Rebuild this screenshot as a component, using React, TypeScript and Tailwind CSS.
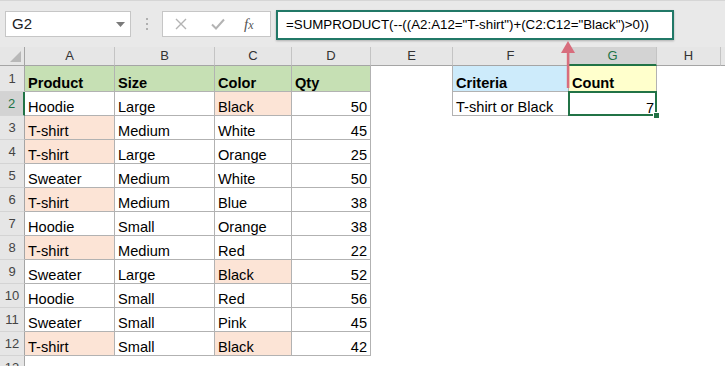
import React from 'react';

type Row = [string, string, string, number];

const rows: Row[] = [
  ['Hoodie', 'Large', 'Black', 50],
  ['T-shirt', 'Medium', 'White', 45],
  ['T-shirt', 'Large', 'Orange', 25],
  ['Sweater', 'Medium', 'White', 50],
  ['T-shirt', 'Medium', 'Blue', 38],
  ['Hoodie', 'Small', 'Orange', 38],
  ['T-shirt', 'Medium', 'Red', 22],
  ['Sweater', 'Large', 'Black', 52],
  ['Hoodie', 'Small', 'Red', 56],
  ['Sweater', 'Small', 'Pink', 45],
  ['T-shirt', 'Small', 'Black', 42],
];

const cols = ['A', 'B', 'C', 'D', 'E', 'F', 'G', 'H'];

const cell = 'flex items-end pb-0 px-[3px] leading-[16px] text-[14.6px] text-black whitespace-nowrap';
const tbl = 'border-r border-b border-[#b2b2b2]';

function RowHead({ n, active }: { n: number; active?: boolean }) {
  return (
    <div
      className={`flex items-center justify-center text-[13px] border-b border-[#d4d4d4] ${
        active ? 'bg-[#d3d3d3] text-[#217346] border-r-2 border-r-[#217346]' : 'bg-[#e6e6e6] text-[#444] border-r border-r-[#a5a5a5]'
      }`}
    >
      {n}
    </div>
  );
}

function Empty({ right }: { right?: boolean }) {
  return <div className={right ? 'border-r border-[#b2b2b2]' : ''} />;
}

export default function App() {
  return (
    <div className="relative w-[725px] h-[366px] overflow-hidden bg-white font-['Liberation_Sans',Arial,sans-serif]">
      {/* formula bar */}
      <div className="h-[47px] bg-[#e9e9e9] flex items-start pt-[9px] border-t border-[#d6d6d6]">
        <div className="ml-[5px] mt-[1px] w-[126px] h-[26px] bg-white border border-[#c6c6c6] flex items-center justify-between pl-[6px] pr-[5px]">
          <span className="text-[15px] text-[#222]">G2</span>
          <svg width="9" height="5" viewBox="0 0 9 5">
            <path d="M0 0h9L4.5 5z" fill="#7a7a7a" />
          </svg>
        </div>
        <div className="w-[31px] h-[28px] flex flex-col items-center justify-center gap-[3px]">
          <span className="w-[2px] h-[2px] bg-[#b0b0b0]" />
          <span className="w-[2px] h-[2px] bg-[#b0b0b0]" />
          <span className="w-[2px] h-[2px] bg-[#b0b0b0]" />
        </div>
        <div className="mt-[1px] w-[109px] h-[26px] bg-white border border-[#c6c6c6] flex items-center">
          <svg className="ml-[12px]" width="12" height="12" viewBox="0 0 12 12">
            <path d="M1 1l10 10M11 1L1 11" stroke="#b3b3b3" strokeWidth="1.4" />
          </svg>
          <svg className="ml-[24px]" width="14" height="12" viewBox="0 0 14 12">
            <path d="M1 6.5l4 4L13 1.5" stroke="#b3b3b3" strokeWidth="2" fill="none" />
          </svg>
          <span className="ml-[19px] text-[15px] italic text-[#555] font-['Liberation_Serif',serif]">
            f<span className="text-[12px]">x</span>
          </span>
        </div>
        <div className="ml-[5px] w-[398px] h-[30px] bg-white border-2 border-[#217867] flex items-center pl-[8px] shadow-[0_1px_2px_rgba(0,0,0,0.25)]">
          <span className="text-[13.3px] text-black whitespace-nowrap">
            =SUMPRODUCT(--((A2:A12="T-shirt")+(C2:C12="Black")&gt;0))
          </span>
        </div>
      </div>

      {/* sheet */}
      <div className="grid grid-cols-[25px_90px_100px_77px_79px_82px_116px_88px_64px_1fr] grid-rows-[19px_26px_repeat(12,24px)]">
        {/* column headers */}
        <div className="bg-[#e6e6e6] border-r border-b border-[#a5a5a5] relative">
          <svg className="absolute right-[3px] bottom-[3px]" width="11" height="11" viewBox="0 0 11 11">
            <path d="M11 0v11H0z" fill="#b8b8b8" />
          </svg>
        </div>
        {cols.map((c) => (
          <div
            key={c}
            className={`flex items-center justify-center text-[13px] border-r border-r-[#c4c4c4] ${
              c === 'G'
                ? 'bg-[#d3d3d3] text-[#217346] border-b-2 border-b-[#217346]'
                : 'bg-[#e6e6e6] text-[#333] border-b border-b-[#a5a5a5]'
            }`}
          >
            {c}
          </div>
        ))}
        <div className="bg-[#e6e6e6] border-b border-[#a5a5a5]" />

        {/* row 1 */}
        <RowHead n={1} />
        {['Product', 'Size', 'Color', 'Qty'].map((h) => (
          <div key={h} className={`${cell} ${tbl} bg-[#c6e0b4] font-bold`}>
            {h}
          </div>
        ))}
        <Empty right />
        <div className={`${cell} ${tbl} bg-[#cdebfb] font-bold`}>Criteria</div>
        <div className={`${cell} ${tbl} bg-[#ffffcc] font-bold`}>Count</div>
        <Empty />
        <Empty />

        {rows.map((r, i) => {
          const n = i + 2;
          return (
            <React.Fragment key={n}>
              <RowHead n={n} active={n === 2} />
              <div className={`${cell} ${tbl} ${r[0] === 'T-shirt' ? 'bg-[#fce4d6]' : ''}`}>{r[0]}</div>
              <div className={`${cell} ${tbl}`}>{r[1]}</div>
              <div className={`${cell} ${tbl} ${r[2] === 'Black' ? 'bg-[#fce4d6]' : ''}`}>{r[2]}</div>
              <div className={`${cell} ${tbl} justify-end`}>{r[3]}</div>
              {n === 2 ? (
                <>
                  <Empty right />
                  <div className={`${cell} ${tbl}`}>T-shirt or Black</div>
                  <div className={`${cell} justify-end relative`}>
                    7
                    <div className="absolute -left-[1px] -top-[1px] right-0 bottom-0 border-2 border-[#217346]" />
                    <div className="absolute -right-[3px] -bottom-[3px] w-[7px] h-[7px] bg-[#217346] border border-white" />
                  </div>
                </>
              ) : (
                <>
                  <Empty />
                  <Empty />
                  <Empty />
                </>
              )}
              <Empty />
              <Empty />
            </React.Fragment>
          );
        })}

        {/* row 13 */}
        <RowHead n={13} />
      </div>

      {/* arrow pointing to formula */}
      <svg className="absolute left-[560px] top-[39px]" width="16" height="50" viewBox="0 0 16 50">
        <path d="M8 2L15 14H1z" fill="#d86d7d" />
        <rect x="6.8" y="12" width="2.6" height="37" fill="#d86d7d" />
      </svg>
    </div>
  );
}
